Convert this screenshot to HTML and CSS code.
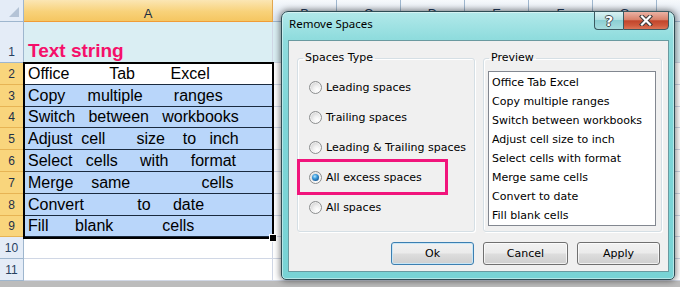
FILE: index.html
```html
<!DOCTYPE html>
<html>
<head>
<meta charset="utf-8">
<title>Remove Spaces</title>
<link rel="stylesheet" href="styles.css">
</head>
<body>
<div class="screen">
  <div class="sheet">
    <div class="row hdr">
      <div class="corner"><span class="tri"></span></div>
      <div class="colh a">A</div>
      <div class="colh">B</div>
      <div class="colh">C</div>
      <div class="colh">D</div>
      <div class="colh">E</div>
      <div class="colh">F</div>
      <div class="colh">G</div>
      <div class="colh"></div>
    </div>
    <div class="row r1">
      <div class="rh">1</div>
      <div class="ca title">Text string</div>
      <div class="rest"></div>
    </div>
    <div class="row selrow active">
      <div class="rh sel">2</div>
      <div class="ca">Office         Tab        Excel</div>
      <div class="rest"></div>
    </div>
    <div class="row selrow">
      <div class="rh sel">3</div>
      <div class="ca">Copy     multiple       ranges</div>
      <div class="rest"></div>
    </div>
    <div class="row selrow">
      <div class="rh sel">4</div>
      <div class="ca">Switch   between   workbooks</div>
      <div class="rest"></div>
    </div>
    <div class="row selrow">
      <div class="rh sel">5</div>
      <div class="ca">Adjust  cell       size    to   inch</div>
      <div class="rest"></div>
    </div>
    <div class="row selrow">
      <div class="rh sel">6</div>
      <div class="ca">Select   cells     with     format</div>
      <div class="rest"></div>
    </div>
    <div class="row selrow">
      <div class="rh sel">7</div>
      <div class="ca">Merge    same                cells</div>
      <div class="rest"></div>
    </div>
    <div class="row selrow">
      <div class="rh sel">8</div>
      <div class="ca">Convert            to     date</div>
      <div class="rest"></div>
    </div>
    <div class="row selrow">
      <div class="rh sel">9</div>
      <div class="ca">Fill      blank           cells</div>
      <div class="rest"></div>
    </div>
    <div class="row">
      <div class="rh">10</div>
      <div class="ca"></div>
      <div class="rest"></div>
    </div>
    <div class="row">
      <div class="rh">11</div>
      <div class="ca"></div>
      <div class="rest"></div>
    </div>
    <div class="selection"><span class="handle"></span></div>
  </div>

  <div class="dialog">
    <div class="titlebar">
      <div class="caption">Remove Spaces</div>
      <div class="capbtns">
        <div class="capbtn help">?</div>
        <div class="capbtn close">
          <svg width="14" height="11" viewBox="0 0 14 11">
            <path d="M3 1.5 L11 9.5 M11 1.5 L3 9.5" stroke="#3a3a3a" stroke-width="4.2" stroke-linecap="square" fill="none"/>
            <path d="M3 1.5 L11 9.5 M11 1.5 L3 9.5" stroke="#ffffff" stroke-width="2.2" stroke-linecap="square" fill="none"/>
          </svg>
        </div>
      </div>
    </div>
    <div class="client">
      <div class="groups">
        <fieldset class="group spaces">
          <legend>Spaces Type</legend>
          <div class="radios">
            <div class="opt"><span class="radio"></span><span>Leading spaces</span></div>
            <div class="opt"><span class="radio"></span><span>Trailing spaces</span></div>
            <div class="opt"><span class="radio"></span><span>Leading &amp; Trailing spaces</span></div>
            <div class="opt marked"><span class="radio on"></span><span>All excess spaces</span></div>
            <div class="opt"><span class="radio"></span><span>All spaces</span></div>
          </div>
        </fieldset>
        <fieldset class="group preview">
          <legend>Preview</legend>
          <div class="list">
            <div>Office Tab Excel</div>
            <div>Copy multiple ranges</div>
            <div>Switch between workbooks</div>
            <div>Adjust cell size to inch</div>
            <div>Select cells with format</div>
            <div>Merge same cells</div>
            <div>Convert to date</div>
            <div>Fill blank cells</div>
          </div>
        </fieldset>
      </div>
      <div class="buttons">
        <div class="btn default">Ok</div>
        <div class="btn cancel">Cancel</div>
        <div class="btn">Apply</div>
      </div>
    </div>
  </div>
</div>
</body>
</html>
```

FILE: styles.css
```css
* { box-sizing: border-box; }
html, body { margin: 0; padding: 0; }
body {
  width: 680px;
  height: 287px;
  overflow: hidden;
  background: #bdbdbd;
  font-family: "Liberation Sans", Arial, sans-serif;
}
.screen {
  position: relative;
  width: 680px;
  height: 287px;
  overflow: hidden;
  background: #bcbcbc;
}

/* ---------- spreadsheet ---------- */
.sheet {
  position: relative;
  width: 745px;
  background: #fff;
}
.row { display: flex; height: 21.8px; }
.row.hdr { height: 22px; }
.row.r1 { height: 41px; }

.corner {
  width: 24px;
  flex: none;
  display: flex;
  justify-content: flex-end;
  align-items: flex-end;
  padding: 0 4px 4px 0;
  background: #e4ecf7;
  border-right: 1px solid #9eb6ce;
  border-bottom: 1px solid #9eb6ce;
}
.tri {
  width: 0;
  height: 0;
  border-left: 10px solid transparent;
  border-bottom: 10px solid #b4c3d6;
}
.colh {
  width: 64px;
  flex: none;
  display: flex;
  align-items: center;
  justify-content: center;
  padding-top: 5px;
  font-size: 13px;
  color: #1e395b;
  background: linear-gradient(#f6f9fc, #dbe4ef);
  border-right: 1px solid #9eb6ce;
  border-bottom: 1px solid #9eb6ce;
}
.colh.a {
  width: 249px;
  color: #1c2c40;
  background: linear-gradient(#fbe6b4, #f8d27a 55%, #f5c661);
  border-right: 1px solid #e2a64f;
  border-bottom: 1px solid #f09c36;
}
.rh {
  width: 24px;
  flex: none;
  display: flex;
  align-items: flex-end;
  justify-content: center;
  font-size: 12px;
  line-height: 20px;
  color: #27415f;
  background: #e4ecf7;
  border-right: 1px solid #9eb6ce;
  border-bottom: 1px solid #9eb6ce;
}
.rh.sel {
  background: #f9d57c;
  color: #1d2f48;
  border-right-color: #e29f3c;
  border-bottom-color: #e7b454;
}
.ca {
  width: 249px;
  flex: none;
  display: flex;
  align-items: flex-end;
  padding-left: 4px;
  font-size: 16px;
  line-height: 20px;
  white-space: pre;
  color: #000;
  border-right: 1px solid #d0d7e5;
  border-bottom: 1px solid #d0d7e5;
}
.rest {
  flex: 1;
  border-bottom: 1px solid #d0d7e5;
  background: repeating-linear-gradient(90deg, transparent 0 63px, #d0d7e5 63px 64px);
}
.r1 .ca, .r1 .rest { background-color: #daeef3; }
.r1 .ca { border-bottom-color: #c4d3da; }
.ca.title {
  font-size: 19px;
  font-weight: bold;
  line-height: 22px;
  color: #f5106a;
}
.selrow .ca {
  background: #b9d6fa;
  border-bottom-color: #1a2a3e;
  border-right-color: #1a2a3e;
}
.selrow.active .ca { background: #fff; }

.selection {
  position: absolute;
  left: 23px;
  top: 62px;
  width: 251px;
  height: 177px;
  border: 2px solid #000;
}
.handle {
  position: absolute;
  right: -4px;
  bottom: -4px;
  width: 6px;
  height: 6px;
  background: #000;
  outline: 1px solid #fff;
}

/* ---------- dialog ---------- */
.dialog {
  position: absolute;
  left: 281px;
  top: 11px;
  width: 394px;
  height: 269px;
  display: flex;
  flex-direction: column;
  border: 1px solid #2e4c54;
  border-radius: 7px 7px 5px 5px;
  background: linear-gradient(180deg, #b2e9ea 0%, #8fdcdd 10%, #7dd5d7 40%, #78d3d5 100%);
  box-shadow: 0 0 6px 1px rgba(0, 0, 0, 0.5), inset 0 0 0 1px rgba(255, 255, 255, 0.45);
  font-family: "DejaVu Sans", Verdana, sans-serif;
  font-size: 11px;
  color: #000;
}
.titlebar {
  height: 28px;
  flex: none;
  display: flex;
  padding-left: 7px;
}
.caption {
  flex: 1;
  padding-top: 4px;
  font-family: "Noto Sans", "Open Sans", sans-serif;
  font-size: 11.5px;
  line-height: 16px;
  color: #000;
}
.capbtns {
  display: flex;
  align-self: flex-start;
  margin-right: 5px;
  margin-top: -1px;
}
.capbtn {
  height: 19px;
  display: flex;
  align-items: center;
  justify-content: center;
  border: 1px solid #3b5960;
}
.capbtn.help {
  width: 29px;
  border-right: none;
  border-radius: 0 0 0 4px;
  background: linear-gradient(#d9f2f3, #b3e0e2 45%, #8ccfd3 50%, #a6dcde);
  font-family: "DejaVu Sans", sans-serif;
  font-weight: bold;
  font-size: 14px;
  color: #fff;
  text-shadow: 1px 0 0 #3d4a4c, -1px 0 0 #3d4a4c, 0 1px 0 #3d4a4c, 0 -1px 0 #3d4a4c;
}
.capbtn.close {
  width: 46px;
  border-radius: 0 0 4px 0;
  background: linear-gradient(#eab2a4, #d9826b 45%, #c2452b 52%, #cf5a3d 80%, #dc7658);
}

.client {
  flex: 1;
  margin: 0 5px 7px 6px;
  display: flex;
  flex-direction: column;
  background: #f0f0f0;
  border: 1px solid #6a9aa0;
}
.groups {
  display: flex;
  gap: 8px;
  padding: 10px 6px 0 8px;
}
.group {
  margin: 0;
  padding: 0;
  min-width: 0;
  height: 181px;
  border: 1px solid #d5dfe5;
  border-radius: 3px;
  box-shadow: inset 1px 1px 0 #fff, 1px 1px 0 #fff;
}
.group legend {
  margin-left: 5px;
  padding: 0 2px;
  line-height: 14px;
  color: #000;
}
.group.spaces { width: 178px; }
.group.preview { width: 179px; }

.radios { padding: 7px 0 0 11px; }
.opt {
  position: relative;
  display: flex;
  align-items: center;
  gap: 4px;
  height: 30px;
}
.radio {
  width: 13px;
  height: 13px;
  flex: none;
  border-radius: 50%;
  border: 1px solid #8c8e8f;
  background: radial-gradient(circle at 65% 70%, #ffffff 0%, #f1f1f1 35%, #d4d4d4 75%, #c8c8c8 100%);
  box-shadow: inset 0 0 0 1px rgba(255, 255, 255, 0.6);
  display: flex;
  align-items: center;
  justify-content: center;
}
.radio.on::after {
  content: "";
  width: 7px;
  height: 7px;
  border-radius: 50%;
  background: radial-gradient(circle at 40% 35%, #b9e6fb 0%, #3d9ee0 35%, #1b5c98 75%, #0d3b6e 100%);
}
.opt.marked::after {
  content: "";
  position: absolute;
  left: -12px;
  top: -3px;
  width: 145px;
  height: 30px;
  border: 3px solid #f1157c;
}

.list {
  height: 155px;
  margin: 6px 5px 0 4px;
  padding: 1px 0 0 3px;
  background: #fff;
  border: 1px solid #828790;
  line-height: 19px;
  white-space: nowrap;
}

.buttons {
  display: flex;
  justify-content: flex-end;
  gap: 9px;
  padding: 10px 8px 0 0;
}
.btn {
  width: 83px;
  height: 23px;
  display: flex;
  align-items: center;
  justify-content: center;
  border: 1px solid #707070;
  border-radius: 3px;
  background: linear-gradient(#f2f2f2, #ebebeb 48%, #dddddd 52%, #cfcfcf);
  box-shadow: inset 0 0 0 1px rgba(255, 255, 255, 0.7);
}
.btn.cancel { width: 85px; }
.btn.default {
  border-color: #3c7fb1;
  background: linear-gradient(#f2f2f2, #ebebeb 48%, #dddddd 52%, #cfcfcf);
  box-shadow: inset 0 0 0 1px #c8e6f6;
}
```
